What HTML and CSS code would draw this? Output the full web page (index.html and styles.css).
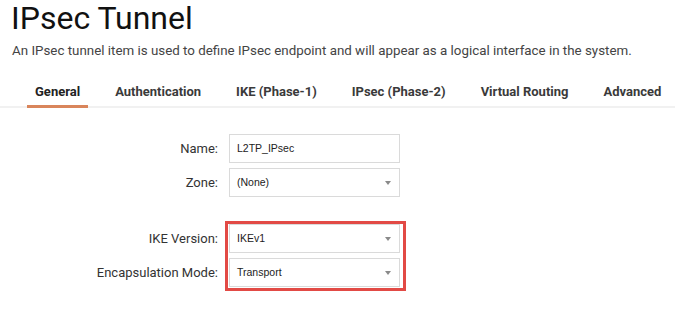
FILE: index.html
```html
<!DOCTYPE html>
<html>
<head>
<meta charset="utf-8">
<link rel="stylesheet" href="styles.css">
</head>
<body>
<h1 class="title">IPsec Tunnel</h1>
<p class="desc">An IPsec tunnel item is used to define IPsec endpoint and will appear as a logical interface in the system.</p>
<div class="tabs">
  <div class="tab active">General</div>
  <div class="tab">Authentication</div>
  <div class="tab">IKE (Phase-1)</div>
  <div class="tab">IPsec (Phase-2)</div>
  <div class="tab">Virtual Routing</div>
  <div class="tab">Advanced</div>
</div>
<div class="form-top">
  <label class="label">Name:</label>
  <div class="field">L2TP_IPsec</div>
  <label class="label">Zone:</label>
  <div class="field select">(None)<span class="arrow"></span></div>
</div>
<div class="form-bottom">
  <div class="labels">
    <label class="label">IKE Version:</label>
    <label class="label">Encapsulation Mode:</label>
  </div>
  <div class="highlight">
    <div class="field select">IKEv1<span class="arrow"></span></div>
    <div class="field select">Transport<span class="arrow"></span></div>
  </div>
</div>
</body>
</html>
```
FILE: styles.css
```css
html, body {
  margin: 0;
  padding: 0;
  background: #ffffff;
}
body {
  width: 675px;
  height: 314px;
  overflow: hidden;
  font-family: Roboto, "Liberation Sans", sans-serif;
}
.title {
  margin: 0;
  padding-left: 11px;
  font-size: 32px;
  line-height: 36px;
  font-weight: 400;
  color: #111;
}
.desc {
  margin: 6px 0 0;
  padding-left: 12px;
  font-size: 13.35px;
  line-height: 18px;
  color: #444;
}
.tabs {
  margin-top: 22px;
  padding-left: 27px;
  display: flex;
  gap: 19px;
  border-bottom: 2px solid #f1f1f1;
}
.tab {
  padding: 1px 8px 4px;
  font-size: 13px;
  line-height: 18px;
  font-weight: 700;
  color: #3a3a3a;
  border-bottom: 3px solid transparent;
  margin-bottom: -2px;
}
.tab.active {
  color: #222;
  border-bottom-color: #d9855b;
}
.form-top {
  margin-top: 26px;
  display: grid;
  grid-template-columns: 218px 171px;
  column-gap: 11px;
  row-gap: 5px;
}
.label {
  font-size: 13px;
  line-height: 29px;
  height: 29px;
  color: #333;
  text-align: right;
  display: block;
}
.field {
  position: relative;
  box-sizing: border-box;
  height: 29px;
  width: 171px;
  border: 1px solid #dadada;
  background: #fff;
  padding-left: 7px;
  font-family: "Liberation Sans", Arial, sans-serif;
  font-size: 10.5px;
  line-height: 27px;
  color: #222;
}
.arrow {
  position: absolute;
  right: 8px;
  top: 12px;
  width: 0;
  height: 0;
  border-left: 3.5px solid transparent;
  border-right: 3.5px solid transparent;
  border-top: 4px solid #8a8a8a;
}
.form-bottom {
  margin-top: 24px;
  display: flex;
  gap: 7px;
}
.labels {
  width: 218px;
  padding-top: 3px;
  display: flex;
  flex-direction: column;
  gap: 5px;
}
.highlight {
  border: 3px solid #e24a45;
  padding: 0 3px 1px 1px;
  display: flex;
  flex-direction: column;
  gap: 5px;
}
```
